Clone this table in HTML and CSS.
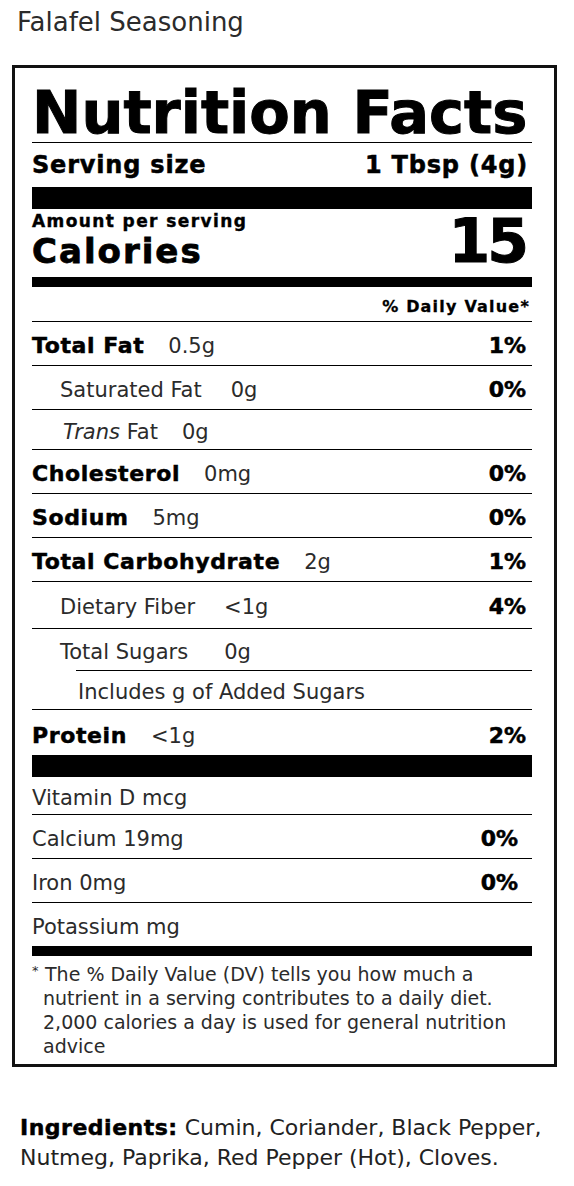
FILE: index.html
```html
<!DOCTYPE html>
<html>
  <head>
    <title>Falafel Seasoning - Nutrition Facts</title>
    <link rel="stylesheet" href="styles.css">
  </head>
  <body>
    <h1 class="product-name">Falafel Seasoning</h1>

    <section class="label">
      <h2 class="label-title">Nutrition Facts</h2>

      <div class="serving">
        <span>Serving size</span>
        <span>1 Tbsp (4g)</span>
      </div>

      <div class="calories">
        <div>
          <div class="amount">Amount per serving</div>
          <div class="calories-name">Calories</div>
        </div>
        <div class="calories-value">15</div>
      </div>

      <div class="dv-head">% Daily Value*</div>

      <div class="row">
        <span class="name">Total Fat</span>
        <span class="amt">0.5g</span>
        <span class="dv">1%</span>
      </div>
      <div class="row sub">
        <span>Saturated Fat</span>
        <span class="amt wide">0g</span>
        <span class="dv">0%</span>
      </div>
      <div class="row sub trans">
        <span><em>Trans</em> Fat</span>
        <span class="amt">0g</span>
      </div>
      <div class="row">
        <span class="name">Cholesterol</span>
        <span class="amt">0mg</span>
        <span class="dv">0%</span>
      </div>
      <div class="row">
        <span class="name">Sodium</span>
        <span class="amt">5mg</span>
        <span class="dv">0%</span>
      </div>
      <div class="row">
        <span class="name">Total Carbohydrate</span>
        <span class="amt">2g</span>
        <span class="dv">1%</span>
      </div>
      <div class="row sub fiber">
        <span>Dietary Fiber</span>
        <span class="amt wide">&lt;1g</span>
        <span class="dv">4%</span>
      </div>
      <div class="row sub open">
        <span>Total Sugars</span>
        <span class="amt wider">0g</span>
      </div>
      <div class="rule-indent"></div>
      <div class="row added">
        <span>Includes g of Added Sugars</span>
      </div>
      <div class="row protein">
        <span class="name">Protein</span>
        <span class="amt">&lt;1g</span>
        <span class="dv">2%</span>
      </div>

      <div class="row vit first">
        <span>Vitamin D mcg</span>
      </div>
      <div class="row vit">
        <span>Calcium 19mg</span>
        <span class="dv">0%</span>
      </div>
      <div class="row vit">
        <span>Iron 0mg</span>
        <span class="dv">0%</span>
      </div>
      <div class="row vit last">
        <span>Potassium mg</span>
      </div>

      <p class="footnote">
        <span class="star">*</span>The % Daily Value (DV) tells you how much a
        nutrient in a serving contributes to a daily diet. 2,000 calories a day
        is used for general nutrition advice
      </p>
    </section>

    <p class="ingredients">
      <strong>Ingredients:</strong> Cumin, Coriander, Black Pepper, Nutmeg,
      Paprika, Red Pepper (Hot), Cloves.
    </p>
  </body>
</html>
```

FILE: styles.css
```css
:root {
  --ink: #000000;
  --text: #2b2b2b;
  --border: #111111;
}

body {
  margin: 0;
  font-family: "DejaVu Sans", "Liberation Sans", sans-serif;
  color: var(--text);
  background-color: #ffffff;
}

.product-name {
  margin: 0;
  padding: 6px 0 0 17px;
  font-size: 26px;
  font-weight: normal;
  line-height: 32px;
}

.label {
  box-sizing: border-box;
  width: 545px;
  margin: 27px 0 0 12px;
  padding: 15px 22px 6px 17px;
  border: 3px solid var(--border);
}

.label-title {
  margin: 0;
  font-size: 59px;
  line-height: 59px;
  font-weight: bold;
  color: var(--ink);
  white-space: nowrap;
  -webkit-text-stroke: 1px var(--ink);
  border-bottom: 1px solid var(--ink);
}

.serving {
  display: flex;
  justify-content: space-between;
  margin-top: 8px;
  padding: 0 4px 8px 0;
  font-size: 24px;
  font-weight: bold;
  line-height: 28px;
  letter-spacing: 0.8px;
  color: var(--ink);
  -webkit-text-stroke: 0.5px var(--ink);
  border-bottom: 22px solid var(--ink);
}

.calories {
  display: flex;
  justify-content: space-between;
  align-items: flex-end;
  padding: 2px 6px 6px 0;
  color: var(--ink);
  font-weight: bold;
  border-bottom: 10px solid var(--ink);
}

.amount {
  font-size: 17px;
  line-height: 20px;
  letter-spacing: 1.4px;
  -webkit-text-stroke: 0.4px var(--ink);
}

.calories-name {
  font-size: 34px;
  line-height: 40px;
  letter-spacing: 2px;
  -webkit-text-stroke: 0.8px var(--ink);
}

.calories-value {
  font-size: 60px;
  line-height: 60px;
  letter-spacing: -3px;
  -webkit-text-stroke: 1px var(--ink);
}

.dv-head {
  padding: 10px 2px 4px 0;
  text-align: right;
  font-size: 16px;
  font-weight: bold;
  line-height: 20px;
  letter-spacing: 1.2px;
  color: var(--ink);
  -webkit-text-stroke: 0.3px var(--ink);
  border-bottom: 1px solid var(--ink);
}

.row {
  display: flex;
  align-items: baseline;
  padding: 11px 6px 6px 0;
  font-size: 21px;
  line-height: 26px;
  border-bottom: 1px solid var(--ink);
}

.row .name {
  font-size: 22px;
  font-weight: bold;
  letter-spacing: 0.6px;
  color: var(--ink);
  -webkit-text-stroke: 0.5px var(--ink);
}

.row .amt {
  margin-left: 24px;
}

.row .amt.wide {
  margin-left: 29px;
}

.row .amt.wider {
  margin-left: 36px;
}

.row .dv {
  margin-left: auto;
  font-size: 22px;
  font-weight: bold;
  color: var(--ink);
  -webkit-text-stroke: 0.5px var(--ink);
}

.row.sub {
  padding-left: 28px;
}

.row.trans {
  padding-top: 9px;
  padding-left: 31px;
  height: 24px;
}

.row.fiber {
  padding-top: 12px;
  height: 28px;
}

.row.open {
  border-bottom: 0;
  padding-top: 10px;
  height: 25px;
}

.rule-indent {
  height: 1px;
  margin-left: 44px;
  background-color: var(--ink);
}

.row.added {
  padding-left: 46px;
  padding-top: 8px;
  height: 24px;
}

.row.protein {
  padding-top: 13px;
  height: 26px;
  border-bottom: 22px solid var(--ink);
}

.row.vit {
  padding-right: 14px;
}

.row.vit.first {
  padding-top: 8px;
  padding-bottom: 3px;
}

.row.vit.last {
  border-bottom: 10px solid var(--ink);
}

.footnote {
  margin: 0;
  padding: 6px 0 0 11px;
  text-indent: -11px;
  font-size: 19px;
  line-height: 24px;
  color: var(--text);
}

.star {
  display: inline-block;
  width: 13px;
  text-indent: 0;
  font-size: 13px;
  vertical-align: top;
  line-height: 18px;
}

.ingredients {
  margin: 46px 0 0 20px;
  font-size: 22px;
  line-height: 30px;
  color: #222222;
}

.ingredients strong {
  color: var(--ink);
  letter-spacing: 0.5px;
  -webkit-text-stroke: 0.5px var(--ink);
}
```
